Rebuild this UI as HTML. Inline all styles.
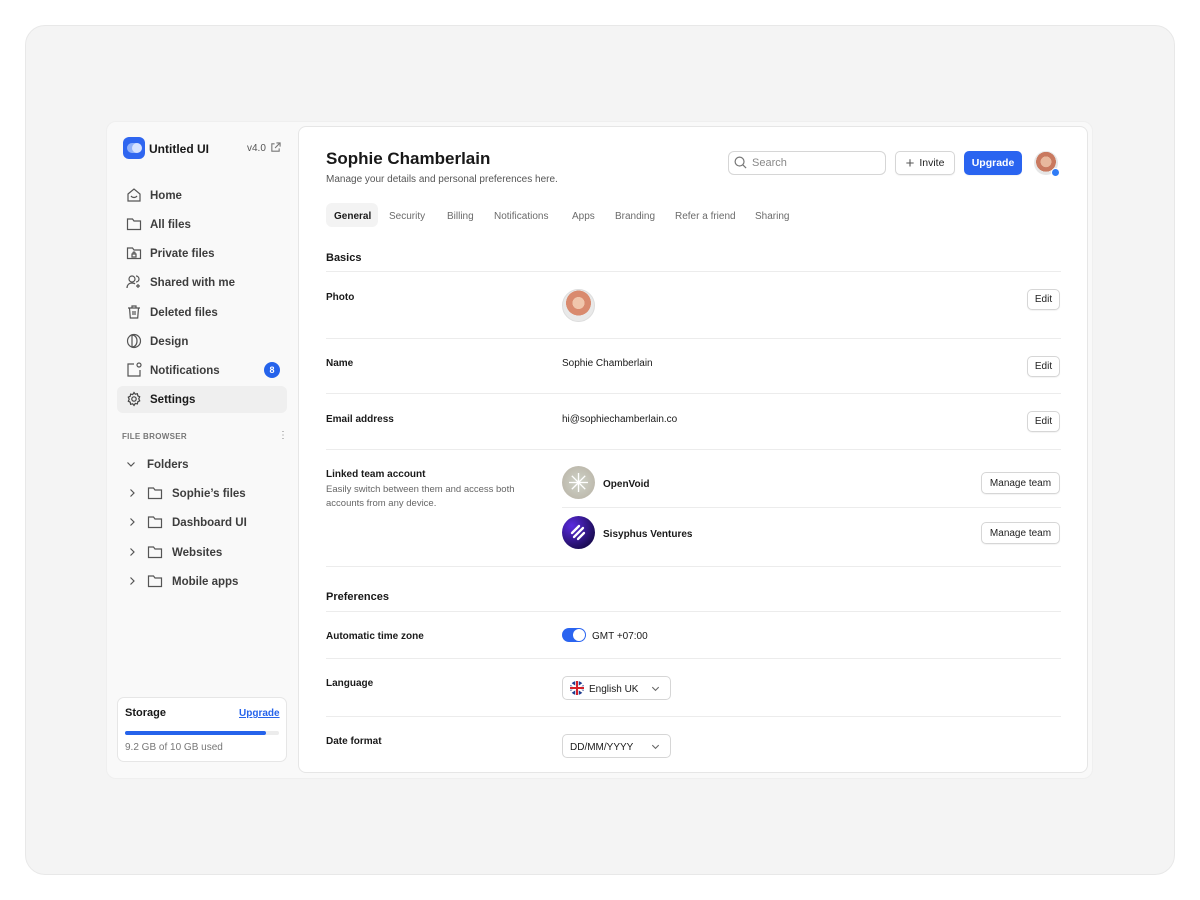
<!DOCTYPE html>
<html><head><meta charset="utf-8"><style>
*{box-sizing:border-box;margin:0;padding:0}
body{width:1200px;height:900px;background:#fff;font-family:"Liberation Sans",sans-serif;position:relative;overflow:hidden;color:#181818}
.a{position:absolute}
.t{position:absolute;white-space:nowrap;line-height:1}
.nav{font-size:11.5px;color:#3d3d3d;font-weight:bold;transform:translateY(-4px)}
.ic{position:absolute;width:16px;height:16px}
.lbl{font-size:10px;font-weight:bold;color:#1a1a1a;transform:translateY(-3px)}
.val{font-size:10px;color:#1a1a1a;transform:translateY(-3px)}
.btn{position:absolute;background:#fff;border:1px solid #d6d6d6;border-radius:5px;font-size:10px;color:#222;display:flex;align-items:center;justify-content:center;box-shadow:0 1px 1px rgba(0,0,0,.05)}
.hl{position:absolute;height:1px;background:#ececec}
.tab{font-size:10px;color:#6b6b6b;transform:translateY(-3px)}
</style></head><body>
<div class="a" style="left:25px;top:25px;width:1150px;height:850px;background:#f4f4f4;border:1px solid #e8e8e8;border-radius:20px"></div>
<div class="a" style="left:106px;top:121px;width:987px;height:658px;background:#f9f9f9;border-radius:10px;border:1px solid #efefef"></div>
<div class="a" style="left:298px;top:126px;width:790px;height:647px;background:#fff;border:1px solid #e6e6e6;border-radius:8px"></div>

<!-- sidebar -->
<div class="a" style="left:123px;top:137px;width:22px;height:22px;background:#2f66f0;border-radius:6px"></div>
<div class="a" style="left:127px;top:143px;width:14px;height:10px;background:#8fb0fa;border-radius:5px"></div>
<div class="a" style="left:132px;top:143px;width:10px;height:10px;background:#d6e2ff;border-radius:5px"></div>
<div class="t" style="left:149px;top:143px;font-size:12px;font-weight:bold">Untitled UI</div>
<div class="t" style="left:247px;top:144px;font-size:10px;color:#555">v4.0</div>
<svg class="ic" style="left:270px;top:142px;width:11px;height:11px" viewBox="0 0 12 12" fill="none" stroke="#777" stroke-width="1.2"><path d="M5 2H2v8h8V7M7 1h4v4M11 1L5.5 6.5"/></svg>

<svg class="ic" style="left:126px;top:187px" viewBox="0 0 16 16" fill="none" stroke="#555" stroke-width="1.2"><path d="M2 7l6-5 6 5v7H2z"/><path d="M5 9c1.5 2 4.5 2 6 0"/></svg>
<div class="t nav" style="left:150px;top:195px">Home</div>
<svg class="ic" style="left:126px;top:216px" viewBox="0 0 16 16" fill="none" stroke="#555" stroke-width="1.2"><path d="M1.5 3h5l1.5 2h6.5v8.5h-13z"/></svg>
<div class="t nav" style="left:150px;top:224px">All files</div>
<svg class="ic" style="left:126px;top:245px" viewBox="0 0 16 16" fill="none" stroke="#555" stroke-width="1.2"><path d="M1.5 3h5l1.5 2h6.5v8.5h-13z"/><rect x="6" y="9" width="4" height="3"/><path d="M7 9V8a1 1 0 012 0v1"/></svg>
<div class="t nav" style="left:150px;top:253px">Private files</div>
<svg class="ic" style="left:126px;top:274px" viewBox="0 0 16 16" fill="none" stroke="#555" stroke-width="1.2"><circle cx="6" cy="5" r="3"/><path d="M1 14c0-3 2-5 5-5 1.5 0 2.5.4 3 1M12 10v4M10 12h4M10 2a3 3 0 010 6"/></svg>
<div class="t nav" style="left:150px;top:282px">Shared with me</div>
<svg class="ic" style="left:126px;top:304px" viewBox="0 0 16 16" fill="none" stroke="#555" stroke-width="1.2"><path d="M2 4h12M6 4V2h4v2M3.5 4l.8 10h7.4l.8-10M7 7v4M9 7v4"/></svg>
<div class="t nav" style="left:150px;top:312px">Deleted files</div>
<svg class="ic" style="left:126px;top:333px" viewBox="0 0 16 16" fill="none" stroke="#555" stroke-width="1.2"><circle cx="8" cy="8" r="6.5"/><path d="M6 2v12c3 0 5-2.5 5-6S9 2 6 2z"/></svg>
<div class="t nav" style="left:150px;top:341px">Design</div>
<svg class="ic" style="left:126px;top:362px" viewBox="0 0 16 16" fill="none" stroke="#555" stroke-width="1.2"><path d="M8 2H2v12h12V8"/><circle cx="13" cy="3" r="2"/></svg>
<div class="t nav" style="left:150px;top:370px">Notifications</div>
<div class="a" style="left:264px;top:362px;width:16px;height:16px;border-radius:8px;background:#2563eb;color:#fff;font-size:9px;font-weight:bold;display:flex;align-items:center;justify-content:center">8</div>
<div class="a" style="left:117px;top:386px;width:170px;height:27px;background:#efefef;border-radius:6px"></div>
<svg class="ic" style="left:126px;top:391px" viewBox="0 0 16 16" fill="none" stroke="#444" stroke-width="1.2"><circle cx="8" cy="8" r="2.2"/><path d="M8 1.5l1.3 1.7 2.1-.5.4 2.1 1.9 1-.9 2 .9 2-1.9 1-.4 2.1-2.1-.5L8 14.5l-1.3-1.7-2.1.5-.4-2.1-1.9-1 .9-2-.9-2 1.9-1 .4-2.1 2.1.5z"/></svg>
<div class="t nav" style="left:150px;top:399px;color:#1a1a1a">Settings</div>

<div class="t" style="left:122px;top:433px;font-size:8px;color:#777;font-weight:bold;letter-spacing:.3px">FILE BROWSER</div>
<div class="t" style="left:278px;top:431px;font-size:10px;color:#888">⋮</div>
<svg class="ic" style="left:125px;top:458px;width:12px;height:12px" viewBox="0 0 12 12" fill="none" stroke="#555" stroke-width="1.2"><path d="M2.5 4.5L6 8l3.5-3.5"/></svg>
<div class="t nav" style="left:147px;top:464px">Folders</div>
<svg class="ic" style="left:126px;top:487px;width:12px;height:12px" viewBox="0 0 12 12" fill="none" stroke="#555" stroke-width="1.2"><path d="M4.5 2.5L8 6l-3.5 3.5"/></svg>
<svg class="ic" style="left:147px;top:485px" viewBox="0 0 16 16" fill="none" stroke="#555" stroke-width="1.2"><path d="M1.5 3h5l1.5 2h6.5v8.5h-13z"/></svg>
<div class="t nav" style="left:172px;top:493px">Sophie’s files</div>
<svg class="ic" style="left:126px;top:516px;width:12px;height:12px" viewBox="0 0 12 12" fill="none" stroke="#555" stroke-width="1.2"><path d="M4.5 2.5L8 6l-3.5 3.5"/></svg>
<svg class="ic" style="left:147px;top:514px" viewBox="0 0 16 16" fill="none" stroke="#555" stroke-width="1.2"><path d="M1.5 3h5l1.5 2h6.5v8.5h-13z"/></svg>
<div class="t nav" style="left:172px;top:522px">Dashboard UI</div>
<svg class="ic" style="left:126px;top:546px;width:12px;height:12px" viewBox="0 0 12 12" fill="none" stroke="#555" stroke-width="1.2"><path d="M4.5 2.5L8 6l-3.5 3.5"/></svg>
<svg class="ic" style="left:147px;top:544px" viewBox="0 0 16 16" fill="none" stroke="#555" stroke-width="1.2"><path d="M1.5 3h5l1.5 2h6.5v8.5h-13z"/></svg>
<div class="t nav" style="left:172px;top:552px">Websites</div>
<svg class="ic" style="left:126px;top:575px;width:12px;height:12px" viewBox="0 0 12 12" fill="none" stroke="#555" stroke-width="1.2"><path d="M4.5 2.5L8 6l-3.5 3.5"/></svg>
<svg class="ic" style="left:147px;top:573px" viewBox="0 0 16 16" fill="none" stroke="#555" stroke-width="1.2"><path d="M1.5 3h5l1.5 2h6.5v8.5h-13z"/></svg>
<div class="t nav" style="left:172px;top:581px">Mobile apps</div>

<div class="a" style="left:117px;top:697px;width:170px;height:65px;background:#fff;border:1px solid #e6e6e6;border-radius:7px"></div>
<div class="t" style="left:125px;top:708px;font-size:11px;font-weight:bold">Storage</div>
<div class="t" style="left:239px;top:709px;font-size:10px;color:#2563eb;font-weight:bold;text-decoration:underline">Upgrade</div>
<div class="a" style="left:125px;top:731px;width:154px;height:4px;background:#ececec;border-radius:2px"></div>
<div class="a" style="left:125px;top:731px;width:141px;height:4px;background:#2563eb;border-radius:2px"></div>
<div class="t" style="left:125px;top:743px;font-size:10px;color:#777">9.2 GB of 10 GB used</div>

<!-- header -->
<div class="t" style="left:326px;top:150px;font-size:17px;font-weight:bold">Sophie Chamberlain</div>
<div class="t" style="left:326px;top:175px;font-size:10px;color:#555">Manage your details and personal preferences here.</div>
<div class="a" style="left:728px;top:151px;width:158px;height:24px;border:1px solid #d6d6d6;border-radius:6px"></div>
<svg class="ic" style="left:734px;top:156px;width:13px;height:13px" viewBox="0 0 14 14" fill="none" stroke="#777" stroke-width="1.3"><circle cx="6" cy="6" r="4.8"/><path d="M9.5 9.5L13 13"/></svg>
<div class="t" style="left:752px;top:158px;font-size:11px;color:#888">Search</div>
<div class="btn" style="left:895px;top:151px;width:60px;height:24px;font-size:10.5px"><span style="font-size:15px;color:#555;margin-right:5px;line-height:1">+</span>Invite</div>
<div class="btn" style="left:964px;top:151px;width:58px;height:24px;background:#2a64f0;border-color:#2a64f0;color:#fff;font-size:10.5px;font-weight:bold">Upgrade</div>
<div class="a" style="left:1034px;top:151px;width:24px;height:24px;border-radius:12px;background:radial-gradient(circle at 50% 45%,#e8b89d 0 30%,#c9795f 31% 55%,#e6e6e6 56%)"></div>
<div class="a" style="left:1051px;top:168px;width:9px;height:9px;border-radius:5px;background:#2f7cf6;border:1.5px solid #fff"></div>

<div class="a" style="left:326px;top:203px;width:52px;height:24px;background:#f3f3f3;border-radius:6px"></div>
<div class="t tab" style="left:334px;top:215px;color:#1a1a1a;font-weight:bold">General</div>
<div class="t tab" style="left:389px;top:215px">Security</div>
<div class="t tab" style="left:447px;top:215px">Billing</div>
<div class="t tab" style="left:494px;top:215px">Notifications</div>
<div class="t tab" style="left:572px;top:215px">Apps</div>
<div class="t tab" style="left:615px;top:215px">Branding</div>
<div class="t tab" style="left:675px;top:215px">Refer a friend</div>
<div class="t tab" style="left:755px;top:215px">Sharing</div>

<div class="t" style="left:326px;top:253px;font-size:11px;font-weight:bold">Basics</div>
<div class="hl" style="left:326px;top:271px;width:735px"></div>

<div class="t lbl" style="left:326px;top:296px">Photo</div>
<div class="a" style="left:562px;top:289px;width:33px;height:33px;border-radius:17px;background:radial-gradient(circle at 50% 42%,#f0c6ac 0 25%,#d98a6e 26% 52%,#e9e9e9 53%);border:1px solid #ddd"></div>
<div class="btn" style="left:1027px;top:289px;width:33px;height:21px">Edit</div>
<div class="hl" style="left:326px;top:338px;width:735px"></div>

<div class="t lbl" style="left:326px;top:362px">Name</div>
<div class="t val" style="left:562px;top:362px">Sophie Chamberlain</div>
<div class="btn" style="left:1027px;top:356px;width:33px;height:21px">Edit</div>
<div class="hl" style="left:326px;top:393px;width:735px"></div>

<div class="t lbl" style="left:326px;top:418px">Email address</div>
<div class="t val" style="left:562px;top:418px">hi@sophiechamberlain.co</div>
<div class="btn" style="left:1027px;top:411px;width:33px;height:21px">Edit</div>
<div class="hl" style="left:326px;top:449px;width:735px"></div>

<div class="t lbl" style="left:326px;top:473px">Linked team account</div>
<div class="t" style="left:326px;top:483px;font-size:9.5px;color:#666;line-height:14px;white-space:normal;width:200px">Easily switch between them and access both accounts from any device.</div>
<div class="a" style="left:562px;top:466px;width:33px;height:33px;border-radius:17px;background:radial-gradient(circle,#cfd3c8,#b7b0a3);display:flex;align-items:center;justify-content:center;color:#fff;font-size:26px;line-height:1">✳</div>
<div class="t lbl" style="left:603px;top:483px">OpenVoid</div>
<div class="btn" style="left:981px;top:472px;width:79px;height:22px">Manage team</div>
<div class="hl" style="left:562px;top:507px;width:499px"></div>
<div class="a" style="left:562px;top:516px;width:33px;height:33px;border-radius:17px;background:radial-gradient(circle at 30% 30%,#5b2be0,#1b0c55 75%)"></div>
<svg class="a" style="left:568px;top:522px;width:21px;height:21px" viewBox="0 0 21 21" fill="none" stroke="#fff" stroke-width="2.3" stroke-linecap="round"><path d="M4 11l7-7M6 15l9-9M10 17l6-6"/></svg>
<div class="t lbl" style="left:603px;top:533px">Sisyphus Ventures</div>
<div class="btn" style="left:981px;top:522px;width:79px;height:22px">Manage team</div>
<div class="hl" style="left:326px;top:566px;width:735px"></div>

<div class="t" style="left:326px;top:592px;font-size:11px;font-weight:bold">Preferences</div>
<div class="hl" style="left:326px;top:611px;width:735px"></div>

<div class="t lbl" style="left:326px;top:635px">Automatic time zone</div>
<div class="a" style="left:562px;top:628px;width:24px;height:14px;border-radius:7px;background:#2a64f0"></div>
<div class="a" style="left:573px;top:629px;width:12px;height:12px;border-radius:6px;background:#fff"></div>
<div class="t val" style="left:592px;top:635px">GMT +07:00</div>
<div class="hl" style="left:326px;top:658px;width:735px"></div>

<div class="t lbl" style="left:326px;top:682px">Language</div>
<div class="a" style="left:562px;top:676px;width:109px;height:24px;border:1px solid #d6d6d6;border-radius:5px"></div>
<svg class="a" style="left:570px;top:681px;width:14px;height:14px" viewBox="0 0 14 14"><circle cx="7" cy="7" r="7" fill="#1f3d8f"/><path d="M1 3l12 8M13 3L1 11" stroke="#fff" stroke-width="2"/><path d="M7 0v14M0 7h14" stroke="#fff" stroke-width="3.5"/><path d="M7 0v14M0 7h14" stroke="#d4202a" stroke-width="2"/></svg>
<div class="t val" style="left:589px;top:688px">English UK</div>
<svg class="a" style="left:650px;top:683px;width:11px;height:11px" viewBox="0 0 12 12" fill="none" stroke="#666" stroke-width="1.2"><path d="M2.5 4.5L6 8l3.5-3.5"/></svg>
<div class="hl" style="left:326px;top:716px;width:735px"></div>

<div class="t lbl" style="left:326px;top:740px">Date format</div>
<div class="a" style="left:562px;top:734px;width:109px;height:24px;border:1px solid #d6d6d6;border-radius:5px"></div>
<div class="t val" style="left:570px;top:746px">DD/MM/YYYY</div>
<svg class="a" style="left:650px;top:741px;width:11px;height:11px" viewBox="0 0 12 12" fill="none" stroke="#666" stroke-width="1.2"><path d="M2.5 4.5L6 8l3.5-3.5"/></svg>
</body></html>
